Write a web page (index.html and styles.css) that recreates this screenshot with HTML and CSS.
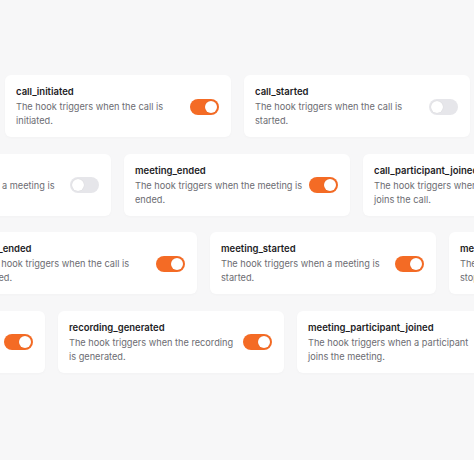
FILE: index.html
```html
<!DOCTYPE html>
<html>
<head>
<meta charset="utf-8">
<link rel="stylesheet" href="styles.css">
</head>
<body>
<div class="board">
  <div class="row row1">
    <div class="card"><div class="text"><div class="title">call_initiated</div><div class="desc">The hook triggers when the call is initiated.</div></div><span class="toggle on"></span></div>
    <div class="card"><div class="text"><div class="title">call_started</div><div class="desc">The hook triggers when the call is started.</div></div><span class="toggle"></span></div>
  </div>
  <div class="row row2">
    <div class="card"><div class="text"><div class="title">meeting_created</div><div class="desc">The hook triggers when a meeting is created.</div></div><span class="toggle"></span></div>
    <div class="card"><div class="text"><div class="title">meeting_ended</div><div class="desc">The hook triggers when the meeting is ended.</div></div><span class="toggle on"></span></div>
    <div class="card"><div class="text"><div class="title">call_participant_joined</div><div class="desc">The hook triggers when a participant joins the call.</div></div><span class="toggle"></span></div>
  </div>
  <div class="row row3">
    <div class="card"><div class="text"><div class="title">call_ended</div><div class="desc">The hook triggers when the call is ended.</div></div><span class="toggle on"></span></div>
    <div class="card"><div class="text"><div class="title">meeting_started</div><div class="desc">The hook triggers when a meeting is started.</div></div><span class="toggle on"></span></div>
    <div class="card"><div class="text"><div class="title">meeting_stopped</div><div class="desc">The hook triggers when a meeting is stopped.</div></div><span class="toggle on"></span></div>
  </div>
  <div class="row row4">
    <div class="card"><div class="text"><div class="title">call_recorded</div><div class="desc">The hook triggers when the call is recorded.</div></div><span class="toggle on"></span></div>
    <div class="card"><div class="text"><div class="title">recording_generated</div><div class="desc">The hook triggers when the recording is generated.</div></div><span class="toggle on"></span></div>
    <div class="card"><div class="text"><div class="title">meeting_participant_joined</div><div class="desc">The hook triggers when a participant joins the meeting.</div></div><span class="toggle on"></span></div>
  </div>
</div>
</body>
</html>
```
FILE: styles.css
```css
html, body {
  margin: 0;
  padding: 0;
  width: 474px;
  height: 460px;
  overflow: hidden;
  background: #f7f7f8;
  font-family: "Inter", "Liberation Sans", sans-serif;
}
.board {
  padding-top: 75px;
  display: flex;
  flex-direction: column;
  gap: 16.5px;
}
.row {
  display: flex;
  gap: 13px;
  white-space: nowrap;
}
.row1 { margin-left: 5px; }
.row2 { margin-left: -115px; }
.row3 { margin-left: -29px; }
.row4 { margin-left: -181px; }
.card {
  flex: 0 0 226px;
  width: 226px;
  height: 62px;
  box-sizing: border-box;
  padding: 10px 12px 9px 11px;
  background: #ffffff;
  border-radius: 6px;
  box-shadow: 0 1px 3px rgba(0, 0, 0, 0.025);
  display: flex;
  align-items: center;
  justify-content: space-between;
  white-space: normal;
}
.text {
  width: 171px;
  align-self: flex-start;
}
.title {
  font-size: 9.5px;
  font-weight: 600;
  color: #1d1d1f;
  line-height: 14px;
  margin-bottom: 1px;
  white-space: nowrap;
}
.desc {
  font-size: 9.2px;
  color: #6c6c72;
  line-height: 14px;
}
.toggle {
  position: relative;
  flex: 0 0 29px;
  width: 29px;
  height: 16px;
  border-radius: 8px;
  background: #e6e6ea;
}
.toggle::after {
  content: "";
  position: absolute;
  top: 2px;
  left: 2px;
  width: 12px;
  height: 12px;
  border-radius: 50%;
  background: #ffffff;
  box-shadow: 0 0 1px rgba(0, 0, 0, 0.15);
}
.toggle.on {
  background: #f46b25;
}
.toggle.on::after {
  left: 15px;
}
```
